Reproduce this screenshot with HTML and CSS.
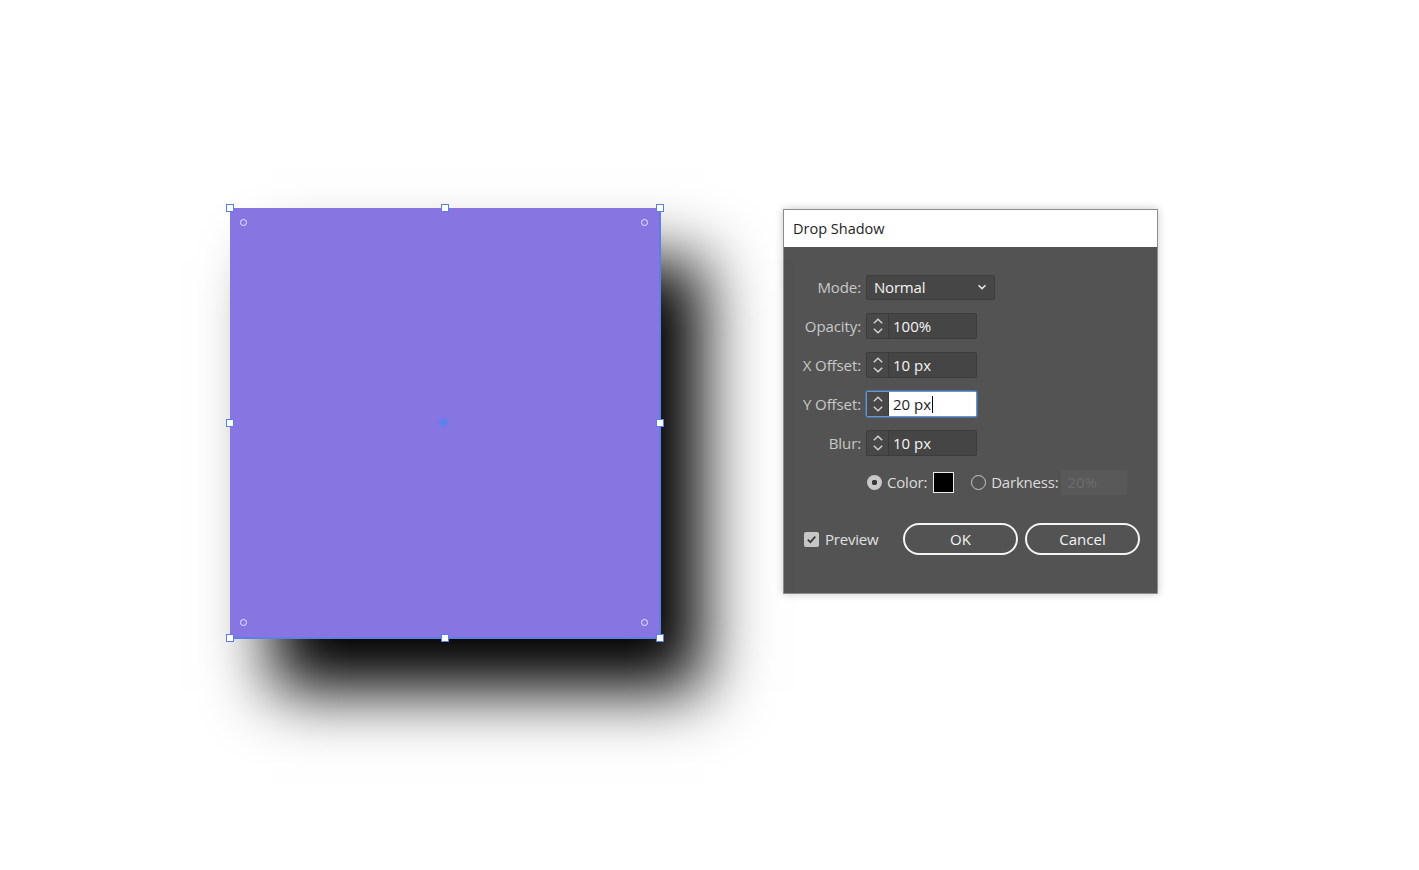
FILE: index.html
```html
<!DOCTYPE html>
<html>
<head>
<meta charset="utf-8">
<link rel="stylesheet" href="styles.css">
</head>
<body>
<div class="stage">
  <div class="art">
    <div class="square">
      <span class="h h-tl"></span><span class="h h-tm"></span><span class="h h-tr"></span>
      <span class="h h-ml"></span><span class="h h-mr"></span>
      <span class="h h-bl"></span><span class="h h-bm"></span><span class="h h-br"></span>
      <span class="w w-tl"></span><span class="w w-tr"></span><span class="w w-bl"></span><span class="w w-br"></span>
      <span class="center"></span>
    </div>
  </div>

  <div class="dialog">
    <div class="title">Drop Shadow</div>
    <div class="body">
      <div class="form">
        <div class="lbl">Mode:</div>
        <div class="select"><span>Normal</span>
          <svg class="chev" width="10" height="6" viewBox="0 0 10 6"><path d="M1.5 1.2 L5 4.6 L8.5 1.2" fill="none" stroke="#e6e6e6" stroke-width="1.5"/></svg>
        </div>

        <div class="lbl">Opacity:</div>
        <div class="spin"><div class="arrows"><svg width="14" height="22" viewBox="0 0 14 22"><path d="M2.8 8.2 L7 4.2 L11.2 8.2 M2.8 13.8 L7 17.8 L11.2 13.8" fill="none" stroke="#d4d4d4" stroke-width="1.4"/></svg></div><div class="val">100%</div></div>

        <div class="lbl">X Offset:</div>
        <div class="spin"><div class="arrows"><svg width="14" height="22" viewBox="0 0 14 22"><path d="M2.8 8.2 L7 4.2 L11.2 8.2 M2.8 13.8 L7 17.8 L11.2 13.8" fill="none" stroke="#d4d4d4" stroke-width="1.4"/></svg></div><div class="val">10 px</div></div>

        <div class="lbl">Y Offset:</div>
        <div class="spin focus"><div class="arrows"><svg width="14" height="22" viewBox="0 0 14 22"><path d="M2.8 8.2 L7 4.2 L11.2 8.2 M2.8 13.8 L7 17.8 L11.2 13.8" fill="none" stroke="#d4d4d4" stroke-width="1.4"/></svg></div><div class="val">20 px<span class="caret"></span></div></div>

        <div class="lbl">Blur:</div>
        <div class="spin"><div class="arrows"><svg width="14" height="22" viewBox="0 0 14 22"><path d="M2.8 8.2 L7 4.2 L11.2 8.2 M2.8 13.8 L7 17.8 L11.2 13.8" fill="none" stroke="#d4d4d4" stroke-width="1.4"/></svg></div><div class="val">10 px</div></div>

        <div class="colorrow">
          <span class="radio on"></span><span class="rl">Color:</span><span class="swatch"></span>
          <span class="radio off"></span><span class="rl">Darkness:</span><span class="dark">20%</span>
        </div>
      </div>

      <div class="footer">
        <label class="check"><span class="box"><svg width="11" height="11" viewBox="0 0 11 11"><path d="M1.8 5.6 L4.4 8.2 L9.3 2.6" fill="none" stroke="#3a3a3a" stroke-width="1.8"/></svg></span><span class="cl">Preview</span></label>
        <button class="btn ok">OK</button>
        <button class="btn">Cancel</button>
      </div>
    </div>
  </div>
</div>
</body>
</html>
```

FILE: styles.css
```css
html, body {
  margin: 0;
  padding: 0;
  background: #ffffff;
  width: 1419px;
  height: 870px;
  overflow: hidden;
}
body {
  font-family: "Open Sans", "Noto Sans", sans-serif;
}
.stage {
  display: flex;
  align-items: flex-start;
  padding: 208px 0 0 230px;
  gap: 122px;
}
.square {
  position: relative;
  width: 431px;
  height: 431px;
  background: #8776e2;
  box-sizing: border-box;
  border-right: 2px solid #5f7fe6;
  border-bottom: 2px solid #5f7fe6;
  box-shadow: 42px 52px 62px #000;
}
.h {
  position: absolute;
  width: 8px;
  height: 8px;
  background: #fff;
  border: 1px solid #5a7de6;
  box-sizing: border-box;
}
.h-tl { left: -4px; top: -4px; }
.h-tm { left: 211px; top: -4px; }
.h-tr { right: -5px; top: -4px; }
.h-ml { left: -4px; top: 211px; }
.h-mr { right: -5px; top: 211px; }
.h-bl { left: -4px; bottom: -5px; }
.h-bm { left: 211px; bottom: -5px; }
.h-br { right: -5px; bottom: -5px; }
.w {
  position: absolute;
  width: 7px;
  height: 7px;
  border: 1.5px solid #e8eaff;
  border-radius: 50%;
  box-sizing: border-box;
}
.w-tl { left: 10px; top: 11px; }
.w-tr { right: 11px; top: 11px; }
.w-bl { left: 10px; bottom: 11px; }
.w-br { right: 11px; bottom: 11px; }
.center {
  position: absolute;
  left: 211px;
  top: 212px;
  width: 5px;
  height: 5px;
  border-radius: 50%;
  background: #4f86f0;
  box-shadow: 0 0 3px 2px rgba(80, 130, 240, 0.6);
}

.dialog {
  margin-top: 1px;
  width: 375px;
  box-sizing: border-box;
  border: 1px solid #8c8c8c;
  background: #535353;
  box-shadow: 0 0 8px rgba(0, 0, 0, 0.22);
}
.title {
  background: #ffffff;
  height: 37px;
  line-height: 37px;
  padding-left: 9px;
  font-size: 14.5px;
  color: #1e1e1e;
}
.body {
  padding: 27px 0 38px 0;
}
.form {
  display: grid;
  grid-template-columns: 77px auto;
  grid-auto-rows: 26px;
  row-gap: 13px;
  column-gap: 5px;
  align-items: center;
  justify-items: start;
}
.lbl {
  justify-self: end;
  font-size: 15px;
  color: #c8c8c8;
  letter-spacing: -0.1px;
}
.select {
  width: 129px;
  height: 25px;
  box-sizing: border-box;
  background: #464646;
  border: 1px solid #3e3e3e;
  border-radius: 2px;
  display: flex;
  align-items: center;
  justify-content: space-between;
  padding: 0 7px 0 7px;
  font-size: 15px;
  color: #f4f4f4;
}
.select span {
  font-weight: 500;
  letter-spacing: -0.2px;
}
.spin {
  width: 111px;
  height: 26px;
  box-sizing: border-box;
  background: #454545;
  border: 1px solid #3c3c3c;
  border-radius: 2px;
  display: flex;
  font-size: 15px;
  color: #f4f4f4;
}
.arrows {
  width: 21px;
  display: flex;
  align-items: center;
  justify-content: center;
  border-right: 1px solid #3a3a3a;
  background: #484848;
}
.val {
  display: flex;
  align-items: center;
  padding-left: 4px;
  flex: 1;
}
.spin.focus {
  border: 1px solid #6b94d0;
  box-shadow: 0 0 0 1px #4d6f9e;
}
.spin.focus .val {
  background: #ffffff;
  color: #1c1c1c;
}
.caret {
  display: inline-block;
  width: 1px;
  height: 17px;
  background: #000;
  margin-left: 1px;
}
.colorrow {
  grid-column: 2;
  display: flex;
  align-items: center;
  font-size: 15px;
  color: #dcdcdc;
  padding-left: 1px;
}
.radio {
  width: 15px;
  height: 15px;
  border-radius: 50%;
  box-sizing: border-box;
  margin-right: 5px;
}
.radio.on {
  background: #c8c8c8 radial-gradient(circle, #3a3a3a 0 2.5px, transparent 3px);
}
.radio.off {
  border: 1.3px solid #c8c8c8;
  margin-left: 17px;
}
.rl {
  margin-right: 6px;
  letter-spacing: -0.2px;
}
.swatch {
  width: 21px;
  height: 21px;
  box-sizing: border-box;
  background: #000;
  border: 1px solid #ececec;
}
.dark {
  width: 66px;
  height: 25px;
  box-sizing: border-box;
  background: #595959;
  color: #6d6d6d;
  display: flex;
  align-items: center;
  padding-left: 6px;
  margin-left: -3px;
}
.footer {
  display: flex;
  align-items: center;
  margin-top: 28px;
  padding-left: 20px;
}
.check {
  display: flex;
  align-items: center;
  font-size: 15px;
  color: #e0e0e0;
  width: 99px;
  letter-spacing: -0.2px;
}
.box {
  width: 15px;
  height: 15px;
  background: #c6c6c6;
  border-radius: 2px;
  display: flex;
  align-items: center;
  justify-content: center;
  margin-right: 6px;
}
.btn {
  width: 115px;
  height: 32px;
  border: 2px solid #f4f4f4;
  border-radius: 16px;
  background: transparent;
  color: #f4f4f4;
  font-family: "Open Sans", "Noto Sans", sans-serif;
  font-size: 15px;
  padding: 0;
  margin-right: 7px;
}
```
